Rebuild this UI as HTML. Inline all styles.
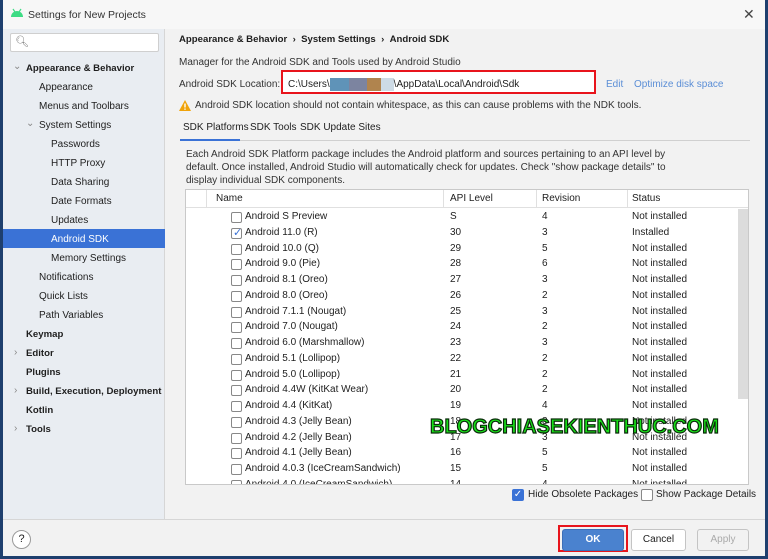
<!DOCTYPE html><html><head><style>
*{margin:0;padding:0;box-sizing:border-box}
body{width:768px;height:559px;overflow:hidden;background:#1e3f6e;font-family:"Liberation Sans",sans-serif;font-size:10px;color:#1e1e1e;position:relative}
.a{position:absolute;white-space:nowrap}
#win{position:absolute;left:3px;top:0;width:762px;height:556px;background:#f2f2f2}
#title{position:absolute;left:0;top:0;width:762px;height:29px;background:#f7f7f7}
#side{position:absolute;left:0;top:29px;width:162px;height:490px;background:#e9edf2;border-right:1px solid #d6d6d6}
.s{position:absolute;white-space:nowrap;font-size:10px}
.b{font-weight:bold;font-size:9.6px}
#tbl{position:absolute;left:182px;top:189px;width:564px;height:296px;background:#fff;border:1px solid #c9c9c9;overflow:hidden}
.r{position:absolute;left:0;width:564px;height:16px}
.cb{position:absolute;width:11px;height:11px;border:1px solid #888;background:#fff;border-radius:2px}
.btn{position:absolute;height:22px;border:1px solid #c4c4c4;border-radius:3px;background:#fff;text-align:center;line-height:20px;font-size:10px}
</style></head><body>
<div id="win">
<div id="title">
<svg class="a" style="left:7px;top:8px" width="14" height="10"><path d="M1 9 A6 6 0 0 1 13 9 Z" fill="#3ddc84"/><path d="M3 1 L5 4 M11 1 L9 4" stroke="#3ddc84" stroke-width="1.2"/></svg>
<div class="a" style="left:25px;top:9px;font-size:10.5px;color:#333">Settings for New Projects</div>
<div class="a" style="left:740px;top:6px;font-size:14px;color:#444">✕</div>
</div>
<div id="side">
<div class="a" style="left:7px;top:4px;width:149px;height:19px;background:#fff;border:1px solid #cfcfcf;border-radius:2px"><span class="a" style="left:4px;top:1px;color:#777;font-size:11px">🔍︎</span></div>
<div class="s" style="left:10px;top:32px;color:#888">⌄</div>
<div class="s b" style="left:23px;top:34px">Appearance &amp; Behavior</div>
<div class="s" style="left:36px;top:53px">Appearance</div>
<div class="s" style="left:36px;top:72px">Menus and Toolbars</div>
<div class="s" style="left:23px;top:89px;color:#888">⌄</div>
<div class="s" style="left:36px;top:91px">System Settings</div>
<div class="s" style="left:48px;top:110px">Passwords</div>
<div class="s" style="left:48px;top:129px">HTTP Proxy</div>
<div class="s" style="left:48px;top:148px">Data Sharing</div>
<div class="s" style="left:48px;top:167px">Date Formats</div>
<div class="s" style="left:48px;top:186px">Updates</div>
<div class="a" style="left:0;top:200px;width:162px;height:19px;background:#3a72d6"></div>
<div class="s" style="left:48px;top:205px;color:#fff">Android SDK</div>
<div class="s" style="left:48px;top:224px">Memory Settings</div>
<div class="s" style="left:36px;top:243px">Notifications</div>
<div class="s" style="left:36px;top:262px">Quick Lists</div>
<div class="s" style="left:36px;top:281px">Path Variables</div>
<div class="s b" style="left:23px;top:300px">Keymap</div>
<div class="s" style="left:11px;top:318px;color:#888">›</div>
<div class="s b" style="left:23px;top:319px">Editor</div>
<div class="s b" style="left:23px;top:338px">Plugins</div>
<div class="s" style="left:11px;top:356px;color:#888">›</div>
<div class="s b" style="left:23px;top:357px">Build, Execution, Deployment</div>
<div class="s b" style="left:23px;top:376px">Kotlin</div>
<div class="s" style="left:11px;top:394px;color:#888">›</div>
<div class="s b" style="left:23px;top:395px">Tools</div>
</div>
<div class="s b" style="left:176px;top:34px">Appearance &amp; Behavior &nbsp;› &nbsp;System Settings &nbsp;› &nbsp;Android SDK</div>
<div class="s" style="left:176px;top:57px;color:#333">Manager for the Android SDK and Tools used by Android Studio</div>
<div class="s" style="left:176px;top:79px;color:#333">Android SDK Location:</div>
<div class="a" style="left:278px;top:70px;width:315px;height:24px;border:2px solid #e8141c;background:#fff"></div>
<div class="s" style="left:285px;top:78px">C:\Users\<span style="display:inline-block;width:64px;height:13px;vertical-align:middle;background:linear-gradient(90deg,#5f93b8 0 30%,#7c84a0 30% 58%,#b0844e 58% 80%,#cddbe6 80%)"></span>\AppData\Local\Android\Sdk</div>
<div class="s" style="left:603px;top:79px;color:#5b8ed6">Edit</div>
<div class="s" style="left:631px;top:79px;color:#5b8ed6">Optimize disk space</div>
<svg class="a" style="left:176px;top:100px" width="12" height="11"><path d="M6 0 L12 11 L0 11Z" fill="#f0a30a"/><rect x="5.3" y="3.5" width="1.4" height="4" fill="#fff"/><rect x="5.3" y="8.5" width="1.4" height="1.3" fill="#fff"/></svg>
<div class="s" style="left:192px;top:100px;color:#333">Android SDK location should not contain whitespace, as this can cause problems with the NDK tools.</div>
<div class="s" style="left:180px;top:122px">SDK Platforms</div>
<div class="s" style="left:247px;top:122px">SDK Tools</div>
<div class="s" style="left:297px;top:122px">SDK Update Sites</div>
<div class="a" style="left:177px;top:140px;width:570px;height:1px;background:#d0d0d0"></div>
<div class="a" style="left:177px;top:139px;width:60px;height:2px;background:#3a72d6"></div>
<div class="s" style="left:183px;top:148px;line-height:13px;color:#333;white-space:normal;width:480px">Each Android SDK Platform package includes the Android platform and sources pertaining to an API level by default. Once installed, Android Studio will automatically check for updates. Check "show package details" to display individual SDK components.</div>
<div id="tbl">
<div class="r" style="top:0;height:18px;border-bottom:1px solid #e0e0e0"></div>
<div class="a" style="left:20px;top:0;width:1px;height:18px;background:#e0e0e0"></div>
<div class="a" style="left:257px;top:0;width:1px;height:18px;background:#e0e0e0"></div>
<div class="a" style="left:350px;top:0;width:1px;height:18px;background:#e0e0e0"></div>
<div class="a" style="left:441px;top:0;width:1px;height:18px;background:#e0e0e0"></div>
<div class="s" style="left:30px;top:3px">Name</div><div class="s" style="left:264px;top:3px">API Level</div><div class="s" style="left:356px;top:3px">Revision</div><div class="s" style="left:446px;top:3px">Status</div>
<div class="a" style="left:552px;top:19px;width:10px;height:190px;background:#dcdcdc"></div>
<div id="rows"></div>
</div>
<div class="a" style="left:509px;top:489px;width:12px;height:12px;background:#3a72d6;border-radius:2px;color:#fff;font-size:10px;line-height:12px;text-align:center">✓</div>
<div class="s" style="left:525px;top:489px">Hide Obsolete Packages</div>
<div class="a" style="left:638px;top:489px;width:12px;height:12px;border:1px solid #888;background:#fff;border-radius:2px"></div>
<div class="s" style="left:653px;top:489px">Show Package Details</div>
<div class="a" style="left:0;top:519px;width:762px;height:1px;background:#d6d6d6"></div>
<div class="a" style="left:9px;top:530px;width:19px;height:19px;border:1px solid #999;border-radius:50%;background:#fff;text-align:center;line-height:17px;font-size:11px">?</div>
<div class="a" style="left:555px;top:525px;width:70px;height:27px;border:2px solid #e8141c"></div>
<div class="btn" style="left:559px;top:529px;width:62px;background:#4a82cf;border-color:#3c6fb8;color:#fff;font-weight:bold">OK</div>
<div class="btn" style="left:628px;top:529px;width:55px">Cancel</div>
<div class="btn" style="left:694px;top:529px;width:52px;color:#aaa;background:#f2f2f2">Apply</div>
<div class="a" style="left:427px;top:416px;font-size:20px;font-weight:900;color:#19e019;-webkit-text-stroke:1.2px #0a2a0a;font-family:'Liberation Sans',sans-serif">BLOGCHIASEKIENTHUC.COM</div>
</div>
<script>
var d=[["Android S Preview","S","4","Not installed",0],["Android 11.0 (R)","30","3","Installed",1],["Android 10.0 (Q)","29","5","Not installed"],["Android 9.0 (Pie)","28","6","Not installed"],["Android 8.1 (Oreo)","27","3","Not installed"],["Android 8.0 (Oreo)","26","2","Not installed"],["Android 7.1.1 (Nougat)","25","3","Not installed"],["Android 7.0 (Nougat)","24","2","Not installed"],["Android 6.0 (Marshmallow)","23","3","Not installed"],["Android 5.1 (Lollipop)","22","2","Not installed"],["Android 5.0 (Lollipop)","21","2","Not installed"],["Android 4.4W (KitKat Wear)","20","2","Not installed"],["Android 4.4 (KitKat)","19","4","Not installed"],["Android 4.3 (Jelly Bean)","18","3","Not installed"],["Android 4.2 (Jelly Bean)","17","3","Not installed"],["Android 4.1 (Jelly Bean)","16","5","Not installed"],["Android 4.0.3 (IceCreamSandwich)","15","5","Not installed"],["Android 4.0 (IceCreamSandwich)","14","4","Not installed"]];
var h="";d.forEach(function(r,i){var y=21+i*15.75;h+='<div class="cb" style="left:45px;top:'+(y+1)+'px">'+(r[4]?'<span style="position:absolute;left:1px;top:-3px;color:#3a72d6;font-size:11px">✓</span>':'')+'</div><div class="s" style="left:59px;top:'+y+'px">'+r[0]+'</div><div class="s" style="left:264px;top:'+y+'px">'+r[1]+'</div><div class="s" style="left:356px;top:'+y+'px">'+r[2]+'</div><div class="s" style="left:446px;top:'+y+'px">'+r[3]+'</div>';});
document.getElementById("rows").innerHTML=h;
</script>
</body></html>
